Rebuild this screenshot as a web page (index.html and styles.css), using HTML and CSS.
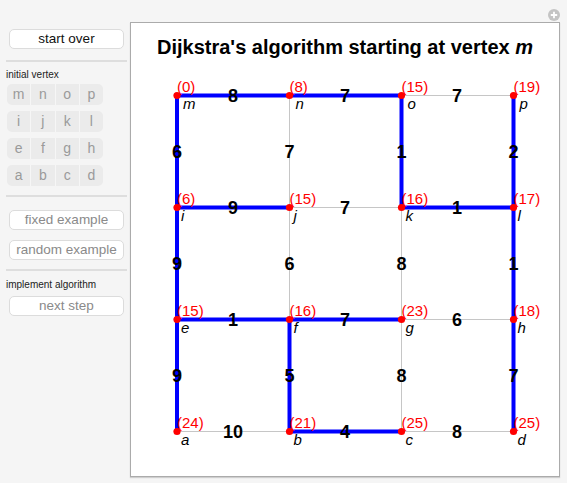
FILE: index.html
```html
<!DOCTYPE html>
<html>
<head>
<meta charset="utf-8">
<link rel="stylesheet" href="styles.css">
</head>
<body>
<div class="app">
  <aside class="controls">
    <button class="btn btn-main">start over</button>
    <div class="sep sep-1"></div>
    <div class="label label-1">initial vertex</div>
    <div class="vgrid">
      <div class="vrow"><span>m</span><span>n</span><span>o</span><span>p</span></div>
      <div class="vrow"><span>i</span><span>j</span><span>k</span><span>l</span></div>
      <div class="vrow"><span>e</span><span>f</span><span>g</span><span>h</span></div>
      <div class="vrow"><span>a</span><span>b</span><span>c</span><span>d</span></div>
    </div>
    <div class="sep sep-2"></div>
    <button class="btn btn-dim btn-fixed">fixed example</button>
    <button class="btn btn-dim btn-random">random example</button>
    <div class="sep sep-3"></div>
    <div class="label label-2">implement algorithm</div>
    <button class="btn btn-dim btn-next">next step</button>
  </aside>
  <main class="view">
    <svg class="graph" width="428" height="453" viewBox="131 23 428 453">
      <text class="title" x="345" y="53.5">Dijkstra's algorithm starting at vertex <tspan class="it">m</tspan></text>
      <g class="thin">
        <line x1="177" y1="95.5" x2="513" y2="95.5"/>
        <line x1="177" y1="207.5" x2="513" y2="207.5"/>
        <line x1="177" y1="319.5" x2="513" y2="319.5"/>
        <line x1="177" y1="431.5" x2="513" y2="431.5"/>
        <line x1="177" y1="95.5" x2="177" y2="431.5"/>
        <line x1="289.5" y1="95.5" x2="289.5" y2="431.5"/>
        <line x1="401.5" y1="95.5" x2="401.5" y2="431.5"/>
        <line x1="513.5" y1="95.5" x2="513.5" y2="431.5"/>
      </g>
      <g class="tree">
        <line x1="177" y1="95.5" x2="401.5" y2="95.5"/>
        <line x1="401.5" y1="95.5" x2="401.5" y2="207.5"/>
        <line x1="513.5" y1="95.5" x2="513.5" y2="431.5"/>
        <line x1="177" y1="95.5" x2="177" y2="431.5"/>
        <line x1="177" y1="207.5" x2="289.5" y2="207.5"/>
        <line x1="401.5" y1="207.5" x2="513.5" y2="207.5"/>
        <line x1="177" y1="319.5" x2="401.5" y2="319.5"/>
        <line x1="289.5" y1="319.5" x2="289.5" y2="431.5"/>
        <line x1="289.5" y1="431.5" x2="401.5" y2="431.5"/>
      </g>
      <g class="weights">
        <text x="233" y="102">8</text>
        <text x="345" y="102">7</text>
        <text x="457" y="102">7</text>
        <text x="233" y="214">9</text>
        <text x="345" y="214">7</text>
        <text x="457" y="214">1</text>
        <text x="233" y="326">1</text>
        <text x="345" y="326">7</text>
        <text x="457" y="326">6</text>
        <text x="233" y="438">10</text>
        <text x="345" y="438">4</text>
        <text x="457" y="438">8</text>
        <text x="177" y="158">6</text>
        <text x="289.5" y="158">7</text>
        <text x="401.5" y="158">1</text>
        <text x="513.5" y="158">2</text>
        <text x="177" y="270">9</text>
        <text x="289.5" y="270">6</text>
        <text x="401.5" y="270">8</text>
        <text x="513.5" y="270">1</text>
        <text x="177" y="382">9</text>
        <text x="289.5" y="382">5</text>
        <text x="401.5" y="382">8</text>
        <text x="513.5" y="382">7</text>
      </g>
      <g class="dots">
        <circle cx="177" cy="95.5" r="3.6"/><circle cx="289.5" cy="95.5" r="3.6"/><circle cx="401.5" cy="95.5" r="3.6"/><circle cx="513.5" cy="95.5" r="3.6"/>
        <circle cx="177" cy="207.5" r="3.6"/><circle cx="289.5" cy="207.5" r="3.6"/><circle cx="401.5" cy="207.5" r="3.6"/><circle cx="513.5" cy="207.5" r="3.6"/>
        <circle cx="177" cy="319.5" r="3.6"/><circle cx="289.5" cy="319.5" r="3.6"/><circle cx="401.5" cy="319.5" r="3.6"/><circle cx="513.5" cy="319.5" r="3.6"/>
        <circle cx="177" cy="431.5" r="3.6"/><circle cx="289.5" cy="431.5" r="3.6"/><circle cx="401.5" cy="431.5" r="3.6"/><circle cx="513.5" cy="431.5" r="3.6"/>
      </g>
      <g class="dist">
        <text x="177" y="91.5">(0)</text><text x="289.5" y="91.5">(8)</text><text x="401.5" y="91.5">(15)</text><text x="513.5" y="91.5">(19)</text>
        <text x="177" y="203.5">(6)</text><text x="289.5" y="203.5">(15)</text><text x="401.5" y="203.5">(16)</text><text x="513.5" y="203.5">(17)</text>
        <text x="177" y="315.5">(15)</text><text x="289.5" y="315.5">(16)</text><text x="401.5" y="315.5">(23)</text><text x="513.5" y="315.5">(18)</text>
        <text x="177" y="427.5">(24)</text><text x="289.5" y="427.5">(21)</text><text x="401.5" y="427.5">(25)</text><text x="513.5" y="427.5">(25)</text>
      </g>
      <g class="names">
        <text x="183" y="109">m</text><text x="295.5" y="109">n</text><text x="407.5" y="109">o</text><text x="519.5" y="109">p</text>
        <text x="181" y="221">i</text><text x="293.5" y="221">j</text><text x="405.5" y="221">k</text><text x="517.5" y="221">l</text>
        <text x="181" y="333">e</text><text x="293.5" y="333">f</text><text x="405.5" y="333">g</text><text x="517.5" y="333">h</text>
        <text x="181" y="445">a</text><text x="293.5" y="445">b</text><text x="405.5" y="445">c</text><text x="517.5" y="445">d</text>
      </g>
    </svg>
  </main>
  <span class="plus" aria-label="more">
    <svg width="12" height="12" viewBox="0 0 12 12"><circle cx="6" cy="6" r="6" fill="#c4c4c4"/><path d="M6 2.8V9.2M2.8 6H9.2" stroke="#fff" stroke-width="1.8"/></svg>
  </span>
</div>
</body>
</html>
```

FILE: styles.css
```css
html, body {
  margin: 0;
  padding: 0;
  background: #f5f5f5;
}
.app {
  position: relative;
  display: flex;
  align-items: flex-start;
  width: 567px;
  height: 483px;
  font-family: "Liberation Sans", Arial, sans-serif;
}
.controls {
  width: 130px;
  box-sizing: border-box;
  padding: 29px 0 0 6px;
  display: flex;
  flex-direction: column;
}
.btn {
  display: block;
  margin: 0 0 0 3px;
  width: 115px;
  height: 20px;
  box-sizing: border-box;
  padding: 0;
  background: #fff;
  border: 1px solid #dcdcdc;
  border-radius: 5px;
  font-family: "Liberation Sans", Arial, sans-serif;
  font-size: 13.5px;
  line-height: 18px;
  color: #111;
  text-align: center;
}
.btn-dim { color: #8a8a8a; }
.sep {
  width: 121px;
  height: 2px;
  background: #dedede;
}
.sep-1 { margin-top: 11px; }
.sep-2 { margin-top: 9px; }
.sep-3 { margin-top: 9px; }
.label {
  font-size: 10px;
  line-height: 12px;
  color: #222;
}
.label-1 { margin-top: 7px; }
.label-2 { margin-top: 8px; }
.btn-fixed { margin-top: 13px; }
.btn-random { margin-top: 10px; }
.btn-next { margin-top: 5px; }
.vgrid {
  margin: 3px 0 0 1px;
  display: flex;
  flex-direction: column;
  gap: 6px;
}
.vrow {
  display: flex;
  width: 96px;
  height: 21px;
  background: #ebebeb;
  border-radius: 5px;
  overflow: hidden;
}
.vrow span {
  flex: 1;
  text-align: center;
  font-size: 14px;
  line-height: 21px;
  color: #9a9a9a;
  border-left: 1px solid #f6f6f6;
}
.vrow span:first-child { border-left: none; }
.view {
  margin-top: 22px;
  width: 430px;
  height: 455px;
  box-sizing: border-box;
  border: 1px solid #ababab;
  background: #fff;
  box-shadow: 0 1px 1px #cfcfcf;
}
.graph { display: block; }
.title {
  font-family: "Liberation Sans", Arial, sans-serif;
  font-weight: bold;
  font-size: 20px;
  text-anchor: middle;
  fill: #000;
}
.title .it { font-style: italic; }
.thin line { stroke: #c6c6c6; stroke-width: 1; }
.tree line { stroke: #0000ff; stroke-width: 4; stroke-linecap: square; }
.weights text {
  font-family: "Liberation Sans", Arial, sans-serif;
  font-weight: bold;
  font-size: 18px;
  text-anchor: middle;
  fill: #000;
}
.dots circle { fill: #ff0000; }
.dist text {
  font-family: "Liberation Sans", Arial, sans-serif;
  font-size: 15px;
  fill: #ff0000;
}
.names text {
  font-family: "Liberation Sans", Arial, sans-serif;
  font-style: italic;
  font-size: 15px;
  fill: #000;
}
.plus {
  position: absolute;
  left: 548px;
  top: 9px;
  width: 12px;
  height: 12px;
}
.plus svg { display: block; }
```
